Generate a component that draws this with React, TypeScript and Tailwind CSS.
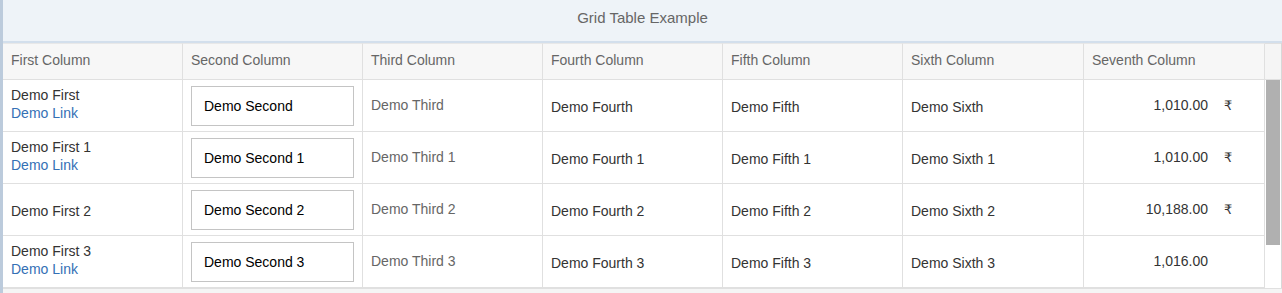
const rows = [
  { first: "Demo First", link: true, second: "Demo Second", third: "Demo Third", fourth: "Demo Fourth", fifth: "Demo Fifth", sixth: "Demo Sixth", amount: "1,010.00", rupee: true },
  { first: "Demo First 1", link: true, second: "Demo Second 1", third: "Demo Third 1", fourth: "Demo Fourth 1", fifth: "Demo Fifth 1", sixth: "Demo Sixth 1", amount: "1,010.00", rupee: true },
  { first: "Demo First 2", link: false, second: "Demo Second 2", third: "Demo Third 2", fourth: "Demo Fourth 2", fifth: "Demo Fifth 2", sixth: "Demo Sixth 2", amount: "10,188.00", rupee: true },
  { first: "Demo First 3", link: true, second: "Demo Second 3", third: "Demo Third 3", fourth: "Demo Fourth 3", fifth: "Demo Fifth 3", sixth: "Demo Sixth 3", amount: "1,016.00", rupee: false },
];

const headers = [
  "First Column",
  "Second Column",
  "Third Column",
  "Fourth Column",
  "Fifth Column",
  "Sixth Column",
  "Seventh Column",
];

const cell = "border-r border-b border-[#e0e0e0] px-2 flex items-center";

const App = () => {
  return (
    <div
      className="w-[1282px] h-[293px] overflow-hidden bg-white border-l-[3px] border-[#bccbdc] text-[14px]"
      style={{ fontFamily: '"Liberation Sans", Arial, sans-serif' }}
    >
      <div className="h-[43px] bg-[#eef3f8] border-b-2 border-[#d3dfec] flex items-center justify-center pb-[4px] text-[15px] text-[#666]">
        Grid Table Example
      </div>

      <div className="flex">
        <div className="grid grid-cols-[180px_180px_180px_180px_180px_181px_181px] auto-rows-[52px] grid-rows-[37px]">
          {headers.map((h) => (
            <div key={h} className={`${cell} pb-[3px] bg-[#f7f7f7] text-[#666] border-t border-t-[#e8e8e8]`}>
              {h}
            </div>
          ))}

          {rows.map((r) => (
            <div key={r.first} className="contents">
              <div className={`${cell} ${r.link ? "pb-[4px]" : "pt-[2px]"} text-[#333]`}>
                <div className="flex flex-col leading-[18px]">
                  <span>{r.first}</span>
                  {r.link && <span className="text-[#3470b5]">Demo Link</span>}
                </div>
              </div>
              <div className={`${cell} pt-[1px]`}>
                <div className="w-[164px] h-[40px] border border-[#c4c4c4] flex items-center pl-3 pt-px text-black">
                  {r.second}
                </div>
              </div>
              <div className={`${cell} text-[#666]`}>{r.third}</div>
              <div className={`${cell} pt-[4px] text-[#333]`}>{r.fourth}</div>
              <div className={`${cell} pt-[4px] text-[#333]`}>{r.fifth}</div>
              <div className={`${cell} pt-[4px] text-[#333]`}>{r.sixth}</div>
              <div className={`${cell} justify-end pr-[33px] text-[#333]`}>
                <span>{r.amount}</span>
                <span className="w-[7px] ml-[16px] text-[13px]" style={{ fontFamily: '"DejaVu Sans", sans-serif' }}>
                  {r.rupee ? "₹" : ""}
                </span>
              </div>
            </div>
          ))}
        </div>

        <div className="w-[17px] flex flex-col border-r border-[#d8d8d8]">
          <div className="h-[37px] bg-[#f5f5f5] border-t border-b border-[#e0e0e0]" />
          <div className="flex-1 bg-white">
            <div className="h-[165px] bg-[#b0b0b0] mx-px" />
          </div>
        </div>
      </div>

      <div className="h-[8px] bg-[#f5f5f5] border-t border-[#e0e0e0]" />
    </div>
  );
};

export default App;
